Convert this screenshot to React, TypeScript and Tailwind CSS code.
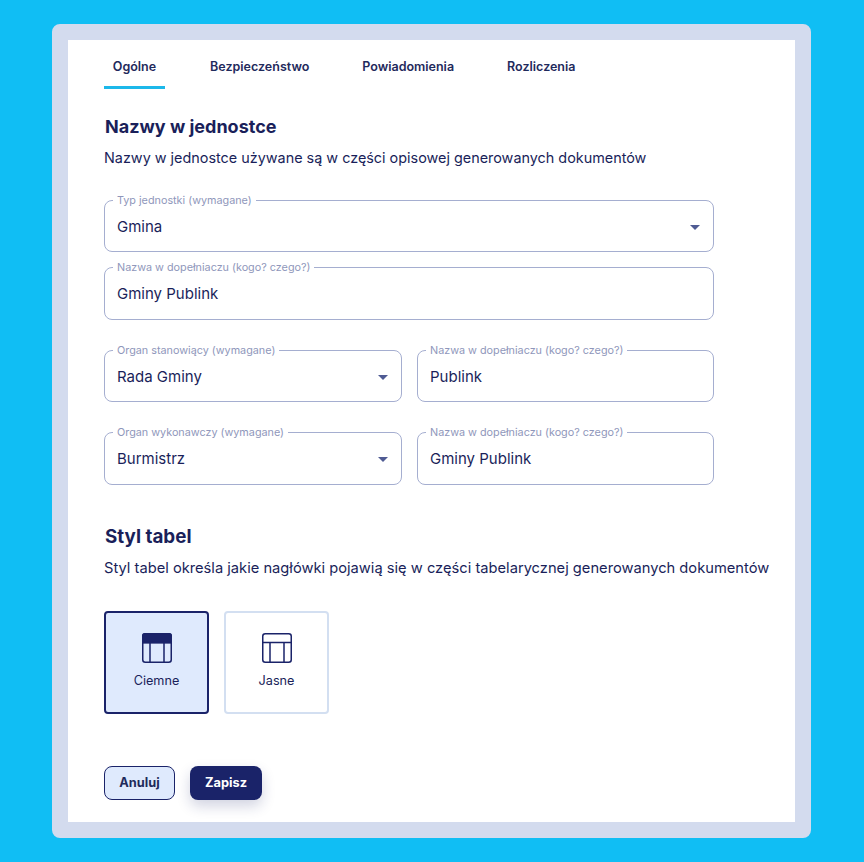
import React from "react";

const F = "font-['Inter','Noto_Sans',sans-serif]";

function Field({ label, value, select, className }: { label: string; value: string; select?: boolean; className?: string }) {
  return (
    <fieldset className={`rounded-lg border border-[#a5aed0] pl-[8px] pr-[13px] ${className ?? "h-[59px]"}`}>
      <legend className="px-[4px] text-[10.8px] leading-[13px] text-[#8f97bb]">{label}</legend>
      <div className="flex h-[41px] items-center justify-between pl-[4px]">
        <span className="text-[15px] text-[#1a1f5a]">{value}</span>
        {select && <span className="h-0 w-0 border-x-[5px] border-t-[5px] border-x-transparent border-t-[#4f5b93]" />}
      </div>
    </fieldset>
  );
}

function TableIcon({ dark }: { dark?: boolean }) {
  return (
    <svg width="30" height="30" viewBox="0 0 30 30" fill="none" stroke="#1a2369" strokeWidth="1.5">
      {dark && <path d="M0 3A3 3 0 0 1 3 0h24a3 3 0 0 1 3 3v7.500H0z" fill="#1a2369" stroke="none" />}
      <rect x="0.750" y="0.750" width="28.500" height="28.500" rx="2.500" />
      <path d="M0 9.500h30M8 9.500v20M22 9.500v20" />
    </svg>
  );
}

export default function App() {
  return (
    <div className={`min-h-[862px] bg-[#10bef4] px-[52px] pt-[24px] ${F}`}>
      <div className="h-[814px] w-[759px] rounded-lg border-[16px] border-[#d3dbee] bg-white text-[#1a1f5a]">
        <div className="pl-[36px]">
          <nav className="flex h-[49px] gap-[37px] text-[12.5px] font-semibold text-[#1f2a5c]">
            {["Ogólne", "Bezpieczeństwo", "Powiadomienia", "Rozliczenia"].map((t, i) => (
              <div key={t} className={`flex h-[49px] items-center justify-center border-b-[3px] px-[8px] pt-[8px] ${i === 0 ? "w-[61px] border-[#1cb8ea]" : "border-transparent"}`}>
                {t}
              </div>
            ))}
          </nav>
          <h2 className="mt-[26px] pl-px text-[18px] font-bold leading-[24px]">Nazwy w jednostce</h2>
          <p className="mt-[9px] text-[14.4px] leading-[20px]">Nazwy w jednostce używane są w części opisowej generowanych dokumentów</p>

          <div className="mt-[26px] flex w-[610px] flex-col">
            <Field className="h-[58px]" label="Typ jednostki (wymagane)" value="Gmina" select />
            <Field className="mt-[9px] h-[59px]" label="Nazwa w dopełniaczu (kogo? czego?)" value="Gminy Publink" />
            <div className="mt-[24px] grid grid-cols-[298px_297px] gap-x-[15px] gap-y-[24px]">
              <Field className="h-[58px]" label="Organ stanowiący (wymagane)" value="Rada Gminy" select />
              <Field className="h-[58px]" label="Nazwa w dopełniaczu (kogo? czego?)" value="Publink" />
              <Field label="Organ wykonawczy (wymagane)" value="Burmistrz" select />
              <Field label="Nazwa w dopełniaczu (kogo? czego?)" value="Gminy Publink" />
            </div>
          </div>

          <h2 className="mt-[40px] pl-px text-[18.8px] font-bold leading-[24px]">Styl tabel</h2>
          <p className="mt-[9px] text-[14.7px] leading-[20px]">Styl tabel określa jakie nagłówki pojawią się w części tabelarycznej generowanych dokumentów</p>

          <div className="mt-[33px] flex gap-[15px]">
            <div className="flex h-[103px] w-[105px] flex-col items-center rounded border-2 border-[#1a2369] bg-[#dfeafd] pt-[20px]">
              <TableIcon dark />
              <span className="mt-[9px] text-[12.7px] leading-[18px]">Ciemne</span>
            </div>
            <div className="flex h-[103px] w-[105px] flex-col items-center rounded border-2 border-[#d3dff1] bg-white pt-[20px]">
              <TableIcon />
              <span className="mt-[9px] text-[12.7px] leading-[18px]">Jasne</span>
            </div>
          </div>

          <div className="mt-[52px] flex gap-[15px] text-[12.8px] font-bold">
            <button className="h-[34px] w-[71px] rounded-lg border border-[#1a2369] bg-[#dfeafd] text-[#1f2a5c]">Anuluj</button>
            <button className="h-[34px] w-[72px] rounded-lg bg-[#1a2369] text-white shadow-[0_6px_14px_rgba(26,35,105,0.2)]">Zapisz</button>
          </div>
        </div>
      </div>
    </div>
  );
}
